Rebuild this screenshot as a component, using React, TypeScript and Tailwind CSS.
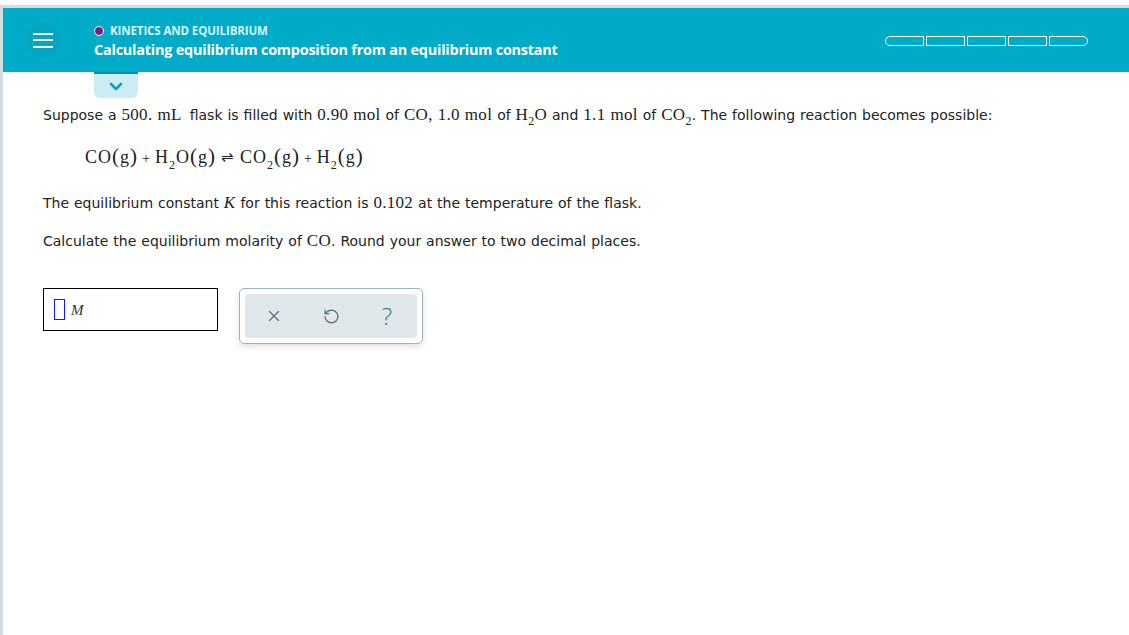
import { X, RotateCcw } from "lucide-react";

function Sub({ children }: { children: React.ReactNode }) {
  return <sub className="text-[12px] relative top-[1px] align-sub leading-none">{children}</sub>;
}

function M({ children }: { children: React.ReactNode }) {
  return <span className="font-['Liberation_Serif',serif] text-[17px] tracking-[0.3px]">{children}</span>;
}

function G() {
  return (
    <span>
      <span className="text-[21px] leading-none">(</span>g<span className="text-[21px] leading-none">)</span>
    </span>
  );
}

export default function App() {
  return (
    <div className="w-[1129px] h-[635px] bg-white overflow-hidden flex flex-col font-['DejaVu_Sans',Verdana,sans-serif]">
      <div className="h-[5px] bg-white shrink-0" />
      <div className="h-[3px] bg-[#dcdcdc] shrink-0" />
      <div className="flex flex-1 min-h-0">
        <div className="w-[3px] bg-[#cfdce1] shrink-0" />
        <div className="flex-1 flex flex-col">
          {/* Header */}
          <header className="h-[64px] bg-[#00abc8] flex items-center shrink-0">
            <div className="w-[34px] h-[34px] ml-[23px] rounded-full bg-[#03a5c1] flex flex-col items-center justify-center gap-[4.5px]">
              <span className="block w-[20px] h-[2px] bg-white" />
              <span className="block w-[20px] h-[2px] bg-white" />
              <span className="block w-[20px] h-[2px] bg-white" />
            </div>
            <div className="ml-[34px] flex flex-col font-['Open_Sans',sans-serif] mt-[3px]">
              <div className="flex items-center gap-[6px]">
                <span className="w-[10px] h-[10px] rounded-full bg-[#7a1f7f] border-[1.5px] border-white" />
                <span className="text-[11.5px] font-bold text-[#d9f3f8] tracking-[-0.1px]">KINETICS AND EQUILIBRIUM</span>
              </div>
              <div className="text-[14.4px] font-bold text-white tracking-[-0.2px]">
                Calculating equilibrium composition from an equilibrium constant
              </div>
            </div>
            <div className="ml-auto mr-[41px] flex gap-[2px] mt-[2px]">
              <span className="w-[39px] h-[10px] border-[1.5px] border-white rounded-l-full" />
              <span className="w-[39px] h-[10px] border-[1.5px] border-white" />
              <span className="w-[39px] h-[10px] border-[1.5px] border-white" />
              <span className="w-[39px] h-[10px] border-[1.5px] border-white" />
              <span className="w-[39px] h-[10px] border-[1.5px] border-white rounded-r-full" />
            </div>
          </header>

          {/* Tab */}
          <div className="ml-[91px] w-[44px] h-[26px] bg-[#ccedf3] border-t-[2px] border-[#0791a8] rounded-b-[6px] flex items-center justify-center">
            <svg width="14" height="9" viewBox="0 0 14 9" fill="none">
              <path d="M2 2 L7 7 L12 2" stroke="#0aa3c0" strokeWidth="2.6" strokeLinecap="round" strokeLinejoin="round" />
            </svg>
          </div>

          {/* Body */}
          <div className="pl-[40px] text-[14px] text-[#222] [word-spacing:0.5px]">
            <p className="mt-[7px] leading-[20px]">
              Suppose a <M>500. mL</M>
              <span className="inline-block w-[8px]" />
              flask is filled with <M>0.90</M> <M>mol</M> of <M>CO,</M> <M>1.0</M> <M>mol</M> of{" "}
              <M>
                H<Sub>2</Sub>O
              </M>{" "}
              and <M>1.1</M> <M>mol</M> of{" "}
              <M>
                CO<Sub>2</Sub>
              </M>
              . The following reaction becomes possible:
            </p>
            <div className="mt-[20px] ml-[42px] h-[24px] flex items-center font-['Liberation_Serif',serif] text-[18px] leading-[22px] text-[#222] tracking-[1px]">
              <span>
                CO<G />
                <span className="text-[14px] mx-[4px]">+</span>H<Sub>2</Sub>O<G />
                <span className="text-[15px] mx-[5px] relative -top-[1px]">⇌</span>CO<Sub>2</Sub><G />
                <span className="text-[14px] mx-[4px]">+</span>H<Sub>2</Sub><G />
              </span>
            </div>
            <p className="mt-[23px] leading-[20px]">
              The equilibrium constant <M><i>K</i></M> for this reaction is <M>0.102</M> at the temperature of the flask.
            </p>
            <p className="mt-[18px] leading-[20px]">
              Calculate the equilibrium molarity of <M>CO</M>. Round your answer to two decimal places.
            </p>

            <div className="mt-[37px] flex items-start gap-[21px]">
              <div className="w-[175px] h-[43px] border border-black flex items-center pl-[10px]">
                <span className="w-[11px] h-[21px] border border-[#1515ff]" />
                <span className="ml-[6px] font-['Liberation_Serif',serif] italic text-[15px] text-[#333]">M</span>
              </div>
              <div className="w-[184px] h-[56px] border border-[#9fb2bc] rounded-[5px] p-[5px] shadow-[0_3px_6px_rgba(0,0,0,0.12)]">
                <div className="w-full h-full bg-[#e0e7ea] rounded-[4px] flex items-center pl-[20px] gap-[40px] text-[#4e6b79]">
                  <X size={18} strokeWidth={1.5} />
                  <RotateCcw size={17} strokeWidth={1.7} />
                  <span className="font-['Open_Sans',sans-serif] font-light text-[24px] leading-none ml-[2px]">?</span>
                </div>
              </div>
            </div>
          </div>
        </div>
      </div>
    </div>
  );
}
